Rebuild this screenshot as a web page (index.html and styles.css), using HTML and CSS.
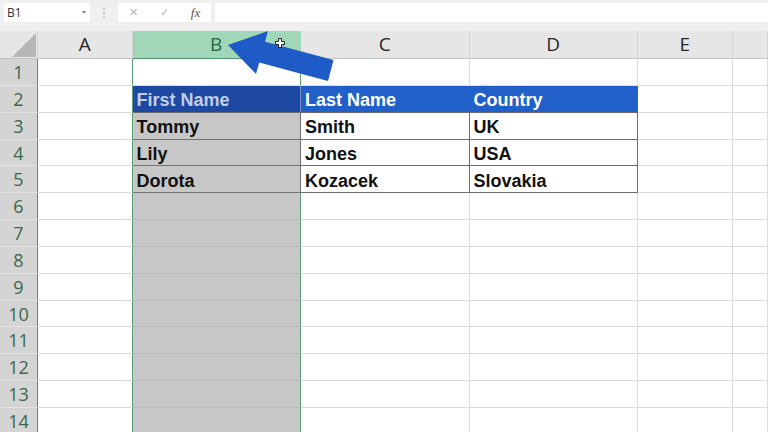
FILE: index.html
```html
<!DOCTYPE html>
<html>
<head>
<meta charset="utf-8">
<link rel="stylesheet" href="styles.css">
</head>
<body>
<div class="toolbar">
  <div class="namebox"><span>B1</span><i class="caret"></i></div>
  <div class="dots"><i></i><i></i><i></i></div>
  <div class="fxbox"><span class="btn">✕</span><span class="btn">✓</span><span class="btn fx">fx</span></div>
  <div class="formula"></div>
</div>
<div class="sheet">
  <div class="corner"></div><div class="ch">A</div><div class="ch sel">B</div><div class="ch">C</div><div class="ch">D</div><div class="ch">E</div><div class="ch"></div>

  <div class="rh">1</div><div class="c a"></div><div class="b b1"></div><div class="c"></div><div class="c"></div><div class="c"></div><div class="c"></div>
  <div class="rh">2</div><div class="c a"></div><div class="th bsel">First Name</div><div class="th">Last Name</div><div class="th">Country</div><div class="c"></div><div class="c"></div>
  <div class="rh">3</div><div class="c a"></div><div class="b td">Tommy</div><div class="c td">Smith</div><div class="c td">UK</div><div class="c"></div><div class="c"></div>
  <div class="rh">4</div><div class="c a"></div><div class="b td">Lily</div><div class="c td">Jones</div><div class="c td">USA</div><div class="c"></div><div class="c"></div>
  <div class="rh">5</div><div class="c a"></div><div class="b td">Dorota</div><div class="c td">Kozacek</div><div class="c td">Slovakia</div><div class="c"></div><div class="c"></div>
  <div class="rh">6</div><div class="c a"></div><div class="b"></div><div class="c"></div><div class="c"></div><div class="c"></div><div class="c"></div>
  <div class="rh">7</div><div class="c a"></div><div class="b"></div><div class="c"></div><div class="c"></div><div class="c"></div><div class="c"></div>
  <div class="rh">8</div><div class="c a"></div><div class="b"></div><div class="c"></div><div class="c"></div><div class="c"></div><div class="c"></div>
  <div class="rh">9</div><div class="c a"></div><div class="b"></div><div class="c"></div><div class="c"></div><div class="c"></div><div class="c"></div>
  <div class="rh">10</div><div class="c a"></div><div class="b"></div><div class="c"></div><div class="c"></div><div class="c"></div><div class="c"></div>
  <div class="rh">11</div><div class="c a"></div><div class="b"></div><div class="c"></div><div class="c"></div><div class="c"></div><div class="c"></div>
  <div class="rh">12</div><div class="c a"></div><div class="b"></div><div class="c"></div><div class="c"></div><div class="c"></div><div class="c"></div>
  <div class="rh">13</div><div class="c a"></div><div class="b"></div><div class="c"></div><div class="c"></div><div class="c"></div><div class="c"></div>
  <div class="rh">14</div><div class="c a"></div><div class="b"></div><div class="c"></div><div class="c"></div><div class="c"></div><div class="c"></div>
</div>
<svg class="overlay" width="768" height="432" viewBox="0 0 768 432">
  <polygon class="arrow" points="228,45 268,31 265,41.7 333.5,60 328,81 259.2,62.4 256,74"/>
  <path class="cursor" d="M278.5,38.5 h3 v3 h3 v3 h-3 v3 h-3 v-3 h-3 v-3 h3 z"/>
</svg>
</body>
</html>
```
FILE: styles.css
```css
* { box-sizing: border-box; margin: 0; padding: 0; }
html, body { width: 768px; height: 432px; overflow: hidden; }
body {
  background: #efefef;
  font-family: "Open Sans", "Noto Sans", sans-serif;
  position: relative;
}
.toolbar {
  height: 22px;
  display: flex;
  align-items: flex-start;
  padding: 3px 0 0 4px;
  background: #efefef;
}
.namebox {
  width: 86px;
  height: 19px;
  background: #fff;
  display: flex;
  align-items: center;
  justify-content: space-between;
  padding: 0 4px 0 3px;
  font-size: 12px;
  color: #333;
}
.caret {
  width: 0; height: 0;
  border-left: 2.5px solid transparent;
  border-right: 2.5px solid transparent;
  border-top: 3px solid #8a8a8a;
}
.dots {
  width: 28px;
  height: 19px;
  display: flex;
  flex-direction: column;
  align-items: center;
  justify-content: center;
  gap: 2px;
}
.dots i { width: 2px; height: 2px; background: #b8b8b8; border-radius: 50%; }
.fxbox {
  width: 93px;
  height: 19px;
  background: #fff;
  display: grid;
  grid-template-columns: 31px 31px 31px;
  align-items: center;
  justify-items: center;
}
.btn { font-family: "DejaVu Sans", sans-serif; font-size: 11px; color: #b4b4b4; }
.btn.fx { font-family: "Liberation Serif", serif; font-style: italic; font-size: 13px; color: #555; }
.formula { flex: 1; height: 19px; background: #fff; margin-left: 4px; }

.sheet {
  margin-top: 9px;
  display: grid;
  grid-template-columns: 38px 94.5px 168.5px 168.5px 168.5px 94.5px 1fr;
  grid-template-rows: 28px repeat(14, 26.85px);
}
.corner {
  background: #e6e6e6;
  border-bottom: 1px solid #c4c4c4;
  border-right: 1px solid #d2d2d2;
  position: relative;
}
.corner::after {
  content: "";
  position: absolute;
  inset: 0;
  background: #b6b6b6;
  clip-path: polygon(36px 2px, 36px 26px, 12px 26px);
}
.ch {
  background: #e6e6e6;
  border-right: 1px solid #d2d2d2;
  border-bottom: 1px solid #c4c4c4;
  font-size: 19px;
  line-height: 27px;
  text-align: center;
  color: #262626;
}
.ch.sel {
  background: #a2d6b9;
  color: #1f6b3c;
  border-bottom-color: #4f9a6d;
  border-right-color: #a2d6b9;
}
.rh {
  background: #d4d4d4;
  border-right: 1px solid #4f9a6d;
  border-bottom: 1px solid #e3e3e3;
  font-size: 18px;
  line-height: 26px;
  text-align: center;
  color: #3a684b;
}
.c {
  background: #fff;
  border-right: 1px solid #dcdcdc;
  border-bottom: 1px solid #dcdcdc;
}
.c.a { border-right-color: #5a9e78; }
.b {
  background: #c7c7c7;
  border-right: 1px solid #5a9e78;
  border-bottom: 1px solid #bababa;
}
.b.b1 { background: #fff; border-bottom-color: #dcdcdc; }
.th, .td {
  font-family: "Liberation Sans", Arial, sans-serif;
  font-weight: bold;
  font-size: 18px;
  line-height: 24px;
  padding: 2.5px 0 0 4px;
  white-space: nowrap;
  overflow: hidden;
}
.th {
  background: #2160c8;
  color: #fff;
  border-right: 1px solid #2160c8;
  border-bottom: 1px solid #6a6a6a;
}
.th.bsel {
  background: #1d49a3;
  color: #c4cdea;
  border-right-color: #7990c4;
}
.td {
  color: #111;
  border-right: 1px solid #6d6d6d;
  border-bottom: 1px solid #6d6d6d;
}
.b.td { border-right-color: #6d6d6d; border-bottom-color: #6e7570; }

.overlay {
  position: absolute;
  left: 0;
  top: 0;
  pointer-events: none;
}
.arrow { fill: #1e5bc6; }
.cursor { fill: #fff; stroke: #222; stroke-width: 1; }
```
